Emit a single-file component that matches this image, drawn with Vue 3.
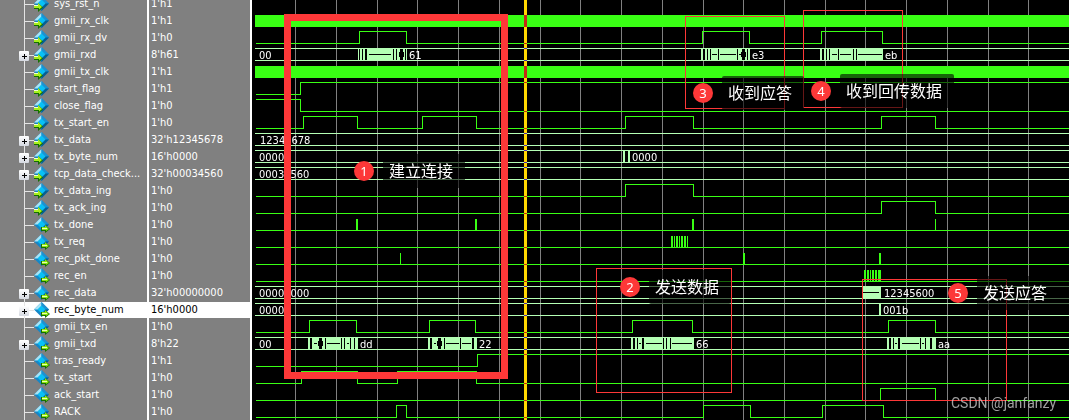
<script setup>
import { ref } from 'vue'

const ROW = 17
const END = 4000

const signals = ref([
  { name: 'sys_rst_n', value: "1'h1", dir: 'in' },
  { name: 'gmii_rx_clk', value: "1'h1", dir: 'in' },
  { name: 'gmii_rx_dv', value: "1'h0", dir: 'in' },
  { name: 'gmii_rxd', value: "8'h61", dir: 'in', bus: true },
  { name: 'gmii_tx_clk', value: "1'h1", dir: 'in' },
  { name: 'start_flag', value: "1'h1", dir: 'in' },
  { name: 'close_flag', value: "1'h0", dir: 'in' },
  { name: 'tx_start_en', value: "1'h0", dir: 'in' },
  { name: 'tx_data', value: "32'h12345678", dir: 'in', bus: true },
  { name: 'tx_byte_num', value: "16'h0000", dir: 'in', bus: true },
  { name: 'tcp_data_check...', value: "32'h00034560", dir: 'in', bus: true },
  { name: 'tx_data_ing', value: "1'h0", dir: 'in' },
  { name: 'tx_ack_ing', value: "1'h0", dir: 'in' },
  { name: 'tx_done', value: "1'h0", dir: 'out' },
  { name: 'tx_req', value: "1'h0", dir: 'out' },
  { name: 'rec_pkt_done', value: "1'h0", dir: 'out' },
  { name: 'rec_en', value: "1'h0", dir: 'out' },
  { name: 'rec_data', value: "32'h00000000", dir: 'out', bus: true },
  { name: 'rec_byte_num', value: "16'h0000", dir: 'out', bus: true, selected: true },
  { name: 'gmii_tx_en', value: "1'h0", dir: 'out' },
  { name: 'gmii_txd', value: "8'h22", dir: 'out', bus: true },
  { name: 'tras_ready', value: "1'h1", dir: 'out' },
  { name: 'tx_start', value: "1'h0", dir: 'out' },
  { name: 'ack_start', value: "1'h0", dir: 'out' },
  { name: 'RACK', value: "1'h0", dir: 'out' }
])

const gridLines = [295, 336, 377, 417, 458, 499, 540, 580, 621, 662, 703, 743, 784, 825, 865, 906, 947, 988, 1028]

// Single-bit traces: level at the left edge, then the x of every toggle.
const bits = [
  { row: 2, start: 0, edges: [359, 406, 702, 749, 821, 882] },
  { row: 5, start: 0, edges: [300] },
  { row: 6, start: 1, edges: [300] },
  { row: 7, start: 0, edges: [303, 357, 422, 476, 625, 693, 881, 935] },
  { row: 11, start: 0, edges: [625, 693] },
  { row: 12, start: 0, edges: [881, 935] },
  { row: 13, start: 0, edges: [] },
  { row: 14, start: 0, edges: [] },
  { row: 15, start: 0, edges: [] },
  { row: 16, start: 0, edges: [] },
  { row: 19, start: 0, edges: [309, 356, 429, 475, 632, 692, 888, 935] },
  { row: 21, start: 0, edges: [477] },
  { row: 22, start: 0, edges: [301, 357, 397, 476] },
  { row: 23, start: 0, edges: [880, 935] },
  { row: 24, start: 0, edges: [396, 406, 703, 750, 822, 883] }
]

// Pulses too short to resolve: [x, width]
const spikes = [
  { row: 13, bars: [[356, 2], [475, 2], [692, 2], [935, 1]] },
  { row: 14, bars: [[671, 2], [674, 1], [676, 2], [679, 1], [681, 2], [684, 2], [687, 1]] },
  { row: 15, bars: [[400, 1], [743, 2], [879, 2]] },
  { row: 16, bars: [[864, 2], [867, 2], [870, 1], [872, 2], [875, 2], [878, 3]] }
]

// Bus traces: bursts are [from, to], cells are the open values inside them, mids the dark seams.
const buses = [
  {
    row: 3,
    texts: [[259, '00'], [409, '61'], [752, 'e3'], [885, 'eb']],
    bursts: [[358, 407], [701, 750], [820, 883]],
    cells: [[359, 360], [362, 363], [365, 367], [393, 394], [396, 397], [400, 403], [405, 406], [703, 705], [707, 708], [710, 711], [718, 719], [737, 738], [742, 745], [747, 748], [822, 824], [826, 827], [829, 830], [838, 839], [853, 854], [856, 857]],
    mids: [[369, 391], [712, 717], [720, 736], [739, 741], [832, 837], [840, 851], [858, 882]]
  },
  { row: 8, texts: [[260, '12345678']], bursts: [], cells: [], mids: [] },
  { row: 9, texts: [[259, '0000'], [632, '0000']], bursts: [[623, 625], [628, 630]], cells: [], mids: [] },
  { row: 10, texts: [[259, '00034560']], bursts: [], cells: [], mids: [] },
  {
    row: 17,
    texts: [[259, '00000000'], [884, '12345600']],
    bursts: [[863, 881]],
    cells: [],
    mids: [[863, 879]]
  },
  { row: 18, texts: [[259, '0000'], [883, '001b']], bursts: [[879, 881]], cells: [], mids: [] },
  {
    row: 20,
    texts: [[259, '00'], [360, 'dd'], [479, '22'], [696, '66'], [938, 'aa']],
    bursts: [[308, 358], [428, 477], [631, 694], [887, 936]],
    cells: [[310, 312], [319, 322], [325, 326], [341, 342], [344, 345], [350, 351], [354, 355], [430, 432], [438, 441], [444, 445], [460, 461], [472, 474], [633, 635], [637, 638], [642, 644], [663, 664], [666, 667], [670, 671], [889, 891], [893, 894], [898, 900], [920, 921], [925, 926], [930, 932]],
    mids: [[314, 317], [327, 340], [347, 349], [434, 436], [446, 459], [462, 471], [639, 641], [646, 662], [672, 692], [895, 897], [902, 919], [922, 924]]
  }
]

const boxes = [
  { x: 685, y: 16, w: 100, h: 93 },
  { x: 803, y: 10, w: 100, h: 98 },
  { x: 596, y: 268, w: 136, h: 125 },
  { x: 862, y: 279, w: 145, h: 122 }
]

const notes = [
  { n: 1, text: '建立连接', x: 364, y: 171, w: 82 },
  { n: 2, text: '发送数据', x: 630, y: 287, w: 82 },
  { n: 3, text: '收到应答', x: 703, y: 93, w: 82 },
  { n: 4, text: '收到回传数据', x: 821, y: 91, w: 114 },
  { n: 5, text: '发送应答', x: 958, y: 293, w: 92 }
]

const high = (row) => row * ROW - 3
const low = (row) => row * ROW + 9

function bitPath({ row, start, edges }) {
  let level = start
  const y = () => (level ? high(row) : low(row)) + 0.5
  let d = `M256 ${y()}`
  for (const x of edges) {
    d += `H${x + 0.5}`
    level = level ? 0 : 1
    d += `V${y()}`
  }
  return d + `H${END}`
}

// Wide cells bulge at mid-height, narrow ones stay straight.
function cellPath(row, [a, b]) {
  const t = high(row) + 1
  const m = t + 5
  if (b - a < 3) return `M${a} ${t}H${b}V${t + 11}H${a}Z`
  return `M${a} ${t}H${b}V${m - 2}H${b + 1}V${m + 3}H${b}V${t + 11}H${a}V${m + 3}H${a - 1}V${m - 2}H${a}Z`
}

function select(signal) {
  signals.value.forEach((s) => { s.selected = s === signal })
}
</script>

<template>
  <main class="viewer">
    <table class="signals" aria-label="Signals">
      <tbody>
        <tr v-for="s in signals" :key="s.name" :class="{ selected: s.selected }" @click="select(s)">
          <td class="name">
            <div class="cell">
              <span class="tree">
                <button v-if="s.bus" type="button" class="expander" :aria-label="'Expand ' + s.name">
                  <svg width="10" height="10" viewBox="0 0 10 10" shape-rendering="crispEdges">
                    <path d="M3 5h5v1H3zM5 3h1v5H5z" fill="#000" />
                  </svg>
                </button>
              </span>
              <svg class="icon" width="16" height="16" viewBox="0 0 16 16">
                <path d="M7.500 0L15 7.500 7.500 15 0 7.500z" fill="#1487c8" />
                <path d="M7.500 0L0 7.500h4l3.500-3.500z" fill="#a8e4f6" />
                <path d="M7.500 0L15 7.500h-4L7.500 4z" fill="#1c93d2" />
                <path d="M15 7.500L7.500 15v-4L11 7.500z" fill="#075f92" />
                <path d="M7.500 3.500l4 4-4 4-4-4z" fill="#08c0f6" />
                <g v-if="s.dir === 'in'">
                  <path d="M0 10h4V7l5 4.500L4 16v-3H0z" fill="#157000" />
                  <path d="M0 9h4V7l4 4-3 2.500V12H0z" fill="#a6f01c" />
                  <path d="M0 9h4v1H0z" fill="#f2ffd0" />
                </g>
                <g v-else>
                  <path d="M7 10h4V8l5 4-5 4v-2H7z" fill="#157000" />
                  <path d="M8 10h3V8l4 4-3 2v-1H8z" fill="#8be60e" />
                  <path d="M8 11h5v1H8z" fill="#eaffb0" />
                </g>
              </svg>
              <span class="label">{{ s.name }}</span>
            </div>
          </td>
          <td class="value">{{ s.value }}</td>
        </tr>
      </tbody>
    </table>

    <svg class="waves" role="img" aria-label="Waveforms">
      <g transform="translate(-252 0)">
        <g shape-rendering="crispEdges">
          <rect class="ground" x="252" y="0" width="4000" height="4000" />
          <rect v-for="x in gridLines" :key="x" class="grid" :x="x" y="0" width="1" height="4000" />
          <rect class="bit-fill" x="255" y="15" :width="END" height="12" />
          <rect class="bit-fill" x="255" y="66" :width="END" height="12" />

          <path v-for="b in bits" :key="'b' + b.row" class="bit" :d="bitPath(b)" />
          <g v-for="s in spikes" :key="'s' + s.row" class="bit-fill">
            <rect v-for="[x, w] in s.bars" :key="x" :x="x" :y="high(s.row) + 1" :width="w" height="12" />
          </g>

          <g v-for="b in buses" :key="'u' + b.row">
            <rect class="bus" x="255" :y="high(b.row)" :width="END" height="1" />
            <rect class="bus" x="255" :y="low(b.row)" :width="END" height="1" />
            <rect v-for="[a, z] in b.bursts" :key="'f' + a" class="bus" :x="a" :y="high(b.row)" :width="z - a" height="13" />
            <path v-for="c in b.cells" :key="'c' + c[0]" class="ground" :d="cellPath(b.row, c)" />
            <rect v-for="[a, z] in b.mids" :key="'m' + a" class="ground" :x="a" :y="high(b.row) + 6" :width="z - a" height="1" />
          </g>
        </g>
        <g v-for="b in buses" :key="'t' + b.row" class="bus-text">
          <text v-for="[x, t] in b.texts" :key="x" :x="x" :y="high(b.row) + 11">{{ t }}</text>
        </g>
        <rect class="cursor" x="524" y="0" width="3" height="4000" />

        <rect class="frame" x="287.500" y="17.500" width="217" height="358" />
        <rect v-for="b in boxes" :key="b.x" class="box" :x="b.x + 0.5" :y="b.y + 0.5" :width="b.w - 1" :height="b.h - 1" />
        <g v-for="n in notes" :key="n.n">
          <rect class="plate" :x="n.x + 19" :y="n.y - 17" :width="n.w" height="34" rx="2" />
          <circle class="badge" :cx="n.x" :cy="n.y" r="10" />
          <text class="number" :x="n.x" :y="n.y + 5">{{ n.n }}</text>
          <text class="caption" :x="n.x + 25" :y="n.y + 6">{{ n.text }}</text>
        </g>
        <text class="watermark" x="951" y="408">CSDN @janfanzy</text>
      </g>
    </svg>
  </main>
</template>

<style>
body {
  margin: 0;
  background: #000;
}
</style>

<style scoped>
.viewer {
  display: flex;
  min-height: 100vh;
  overflow: hidden;
  background: #808080;
  font-family: "DejaVu Sans Condensed", "DejaVu Sans", sans-serif;
  font-size: 11px;
}
.signals {
  flex: none;
  align-self: flex-start;
  width: 252px;
  margin-top: -5px;
  table-layout: fixed;
  border-collapse: separate;
  border-spacing: 0;
  color: #fff;
}
td {
  height: 17px;
  padding: 0;
  line-height: 17px;
  white-space: nowrap;
}
.name {
  width: 147px;
}
.value {
  padding-left: 2px;
  border-left: 2px solid #fff;
  border-right: 2px solid #fff;
}
.cell {
  display: flex;
  height: 17px;
}
.tree {
  display: flex;
  align-items: center;
  box-sizing: border-box;
  width: 34px;
  height: 17px;
  padding: 3px 0 0 19px;
  background:
    linear-gradient(#e4e4e4, #e4e4e4) 24px 0 / 1px 17px no-repeat,
    linear-gradient(#e4e4e4, #e4e4e4) 24px 9px / 10px 1px no-repeat;
}
.expander {
  display: block;
  width: 10px;
  height: 10px;
  padding: 0;
  border: 0;
  border-radius: 1px;
  background: linear-gradient(#fff, #d4d8e0);
  line-height: 0;
}
.icon {
  flex: none;
  width: 16px;
  margin-top: 1px;
}
.label {
  padding-left: 4px;
}
.selected td {
  color: #000;
  background-image: linear-gradient(#808080 1px, #fff 1px);
}
.waves {
  flex: 1;
  min-width: 0;
  height: 100vh;
  isolation: isolate;
}
.ground {
  fill: #000;
}
.grid {
  fill: #808080;
}
.bit {
  fill: none;
  stroke: #39ff14;
}
.bit-fill {
  fill: #39ff14;
}
.bus {
  fill: #b4ffb4;
}
.bus-text {
  fill: #fff;
}
.cursor {
  fill: #ffd700;
  mix-blend-mode: difference;
}
.frame {
  fill: none;
  stroke: #fd3838;
  stroke-width: 7px;
}
.box {
  fill: none;
  stroke: #fd3838;
}
.plate {
  fill: #000;
  fill-opacity: 0.6;
}
.badge {
  fill: #fd3838;
}
.number {
  fill: #fff;
  font: 13px "Noto Sans", sans-serif;
  text-anchor: middle;
}
.caption {
  fill: #fff;
  font: 16px "Noto Sans CJK SC", sans-serif;
}
.watermark {
  fill: #c8c8c8;
  fill-opacity: 0.8;
  font: 14px Roboto, sans-serif;
}
</style>
